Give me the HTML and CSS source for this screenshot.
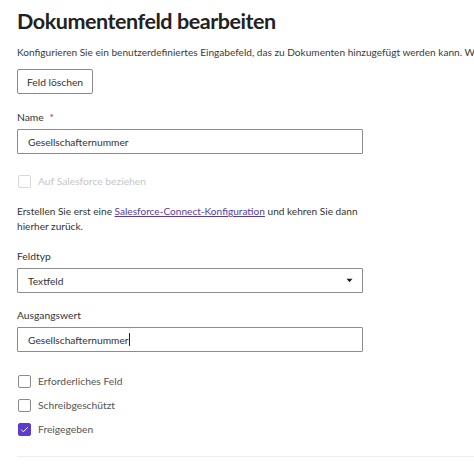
FILE: index.html
```html
<!DOCTYPE html>
<html lang="de">
<head>
<meta charset="utf-8">
<title>Dokumentenfeld bearbeiten</title>
<link rel="stylesheet" href="styles.css">
</head>
<body>
<main class="page">
  <h1 class="title">Dokumentenfeld bearbeiten</h1>
  <div class="intro-wrap"><p class="intro">Konfigurieren Sie ein benutzerdefiniertes Eingabefeld, das zu Dokumenten hinzugefügt werden kann. Weitere Informationen</p></div>
  <button class="btn" type="button">Feld löschen</button>

  <div class="field field-name">
    <label class="label">Name <span class="req">*</span></label>
    <div class="input">Gesellschafternummer</div>
  </div>

  <label class="check disabled sf">
    <span class="box"></span>
    <span>Auf Salesforce beziehen</span>
  </label>

  <p class="hint">Erstellen Sie erst eine <a href="#" class="link">Salesforce-Connect-Konfiguration</a> und kehren Sie dann hierher zurück.</p>

  <div class="field field-type">
    <label class="label">Feldtyp</label>
    <div class="input select">
      <span>Textfeld</span>
      <svg class="caret" width="7" height="5" viewBox="0 0 7 5"><path d="M0.5 0.8 H6.5 L3.5 4.3 Z" fill="#222"/></svg>
    </div>
  </div>

  <div class="field field-init">
    <label class="label">Ausgangswert</label>
    <div class="input focus">Gesellschafternummer<span class="cursor"></span></div>
  </div>

  <div class="checks">
    <label class="check"><span class="box"></span><span>Erforderliches Feld</span></label>
    <label class="check"><span class="box"></span><span>Schreibgeschützt</span></label>
    <label class="check"><span class="box checked"><svg width="9" height="7" viewBox="0 0 9 7"><path d="M1.2 3.6 L3.4 5.8 L7.8 1.2" fill="none" stroke="#fff" stroke-width="1"/></svg></span><span>Freigegeben</span></label>
  </div>

  <hr class="rule">
</main>
</body>
</html>
```

FILE: styles.css
```css
* { box-sizing: border-box; }
html, body { margin: 0; padding: 0; background: #fff; }
body {
  font-family: Lato, "Open Sans", "Liberation Sans", sans-serif;
  color: #333;
  width: 474px;
  height: 469px;
  overflow: hidden;
}
.page {
  padding: 7px 0 0 17px;
}
.title {
  margin: 0;
  font-size: 21.5px;
  line-height: 28px;
  font-weight: 700;
  color: #222;
  letter-spacing: -0.45px;
}
.intro-wrap {
  overflow: hidden;
  width: 457px;
  margin-top: 10px;
}
.intro {
  margin: 0;
  font-size: 10.1px;
  line-height: 14px;
  white-space: nowrap;
  color: #3a3a3a;
}
.btn {
  display: block;
  margin-top: 10px;
  height: 25px;
  width: 76px;
  padding: 0;
  border: 1px solid #8a8a8a;
  border-radius: 2px;
  background: #fff;
  font-family: inherit;
  font-size: 10.3px;
  color: #333;
}
.field { display: flex; flex-direction: column; }
.label {
  font-size: 10.3px;
  line-height: 14px;
  color: #333;
  margin-bottom: 5px;
}
.req { color: #9c2f4e; margin-left: 3px; }
.field-name { margin-top: 16px; }
.input {
  width: 346px;
  height: 25px;
  border: 1px solid #8c8c8c;
  border-radius: 1px;
  padding: 0 10px;
  display: flex;
  align-items: center;
  font-size: 10.2px;
  color: #333;
}
.select { justify-content: space-between; padding-right: 9px; }
.cursor {
  display: inline-block;
  width: 1px;
  height: 13px;
  background: #222;
}
.check {
  display: flex;
  align-items: center;
  gap: 7px;
  padding-left: 1px;
  font-size: 10.3px;
  line-height: 14px;
  color: #555;
}
.box {
  width: 13px;
  height: 13px;
  border: 1px solid #8a8a8a;
  border-radius: 2px;
  display: flex;
  align-items: center;
  justify-content: center;
  flex: none;
}
.box.checked { background: #5b3ccf; border-color: #5b3ccf; }
.disabled { color: #c6c6c6; }
.disabled .box { border-color: #d8d8d8; }
.sf { margin-top: 20px; }
.hint {
  margin: 16px 0 0;
  width: 350px;
  font-size: 10.1px;
  line-height: 14.5px;
  color: #333;
}
.link { color: #5a3b9c; }
.field-type { margin-top: 16px; }
.field-init { margin-top: 15px; }
.checks {
  margin-top: 22px;
  display: flex;
  flex-direction: column;
  gap: 10.2px;
}
.rule {
  margin: 20px 0 0;
  border: 0;
  border-top: 1px solid #eeeeee;
}
```
